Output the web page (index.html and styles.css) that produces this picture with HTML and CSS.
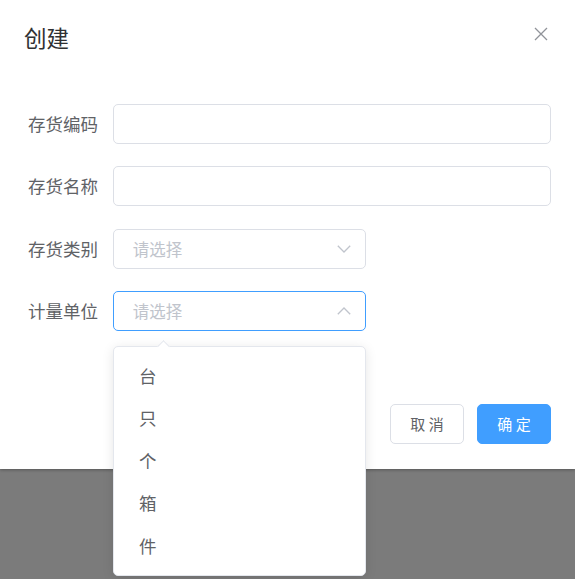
FILE: index.html
```html
<!DOCTYPE html>
<html lang="zh-CN">
<head>
<meta charset="utf-8">
<title>创建</title>
<link rel="stylesheet" href="styles.css">
</head>
<body>
<div class="dialog">
  <div class="dialog-header">
    <span class="dialog-title">创建</span>
    <span class="close-btn">
      <svg width="20" height="20" viewBox="0 0 20 20"><path d="M4 4 L16 16 M16 4 L4 16" stroke="#909399" stroke-width="1.3" fill="none"/></svg>
    </span>
  </div>
  <div class="dialog-body">
    <div class="form-item">
      <label class="form-label">存货编码</label>
      <div class="input input-wide"></div>
    </div>
    <div class="form-item">
      <label class="form-label">存货名称</label>
      <div class="input input-wide"></div>
    </div>
    <div class="form-item">
      <label class="form-label">存货类别</label>
      <div class="input select">
        <span class="placeholder">请选择</span>
        <svg class="chevron" width="14" height="8" viewBox="0 0 14 8"><path d="M0.8 0.8 L7 7 L13.2 0.8" stroke="#c0c4cc" stroke-width="1.3" fill="none"/></svg>
      </div>
    </div>
    <div class="form-item">
      <label class="form-label">计量单位</label>
      <div class="input select focused">
        <span class="placeholder">请选择</span>
        <svg class="chevron" width="14" height="8" viewBox="0 0 14 8"><path d="M0.8 7.2 L7 1 L13.2 7.2" stroke="#c0c4cc" stroke-width="1.3" fill="none"/></svg>
      </div>
    </div>
  </div>
  <div class="dialog-footer">
    <button class="btn">取 消</button>
    <button class="btn btn-primary">确 定</button>
  </div>
</div>
<div class="dropdown">
  <div class="dropdown-arrow"></div>
  <ul class="dropdown-list">
    <li class="dropdown-item">台</li>
    <li class="dropdown-item">只</li>
    <li class="dropdown-item">个</li>
    <li class="dropdown-item">箱</li>
    <li class="dropdown-item">件</li>
  </ul>
</div>
</body>
</html>
```

FILE: styles.css
```css
* { box-sizing: border-box; }
html, body {
  margin: 0;
  padding: 0;
  background: #7b7b7b;
  font-family: "Noto Sans CJK SC", "Noto Sans", sans-serif;
  width: 575px;
  height: 579px;
  overflow: hidden;
}
.dialog {
  background: #fff;
  width: 575px;
  box-shadow: 0 1px 3px rgba(0,0,0,0.3);
}
.dialog-header {
  display: flex;
  justify-content: space-between;
  align-items: flex-start;
  padding: 25px 25px 16.5px 24px;
}
.dialog-title {
  font-size: 22.5px;
  line-height: 25px;
  color: #303133;
}
.close-btn {
  width: 20px;
  height: 20px;
  display: block;
  margin-top: -1px;
  margin-right: -1px;
}
.close-btn svg { display: block; }
.dialog-body {
  padding: 37px 24px 37.5px 25px;
}
.form-item {
  display: flex;
  align-items: center;
  margin-bottom: 22.5px;
}
.form-label {
  width: 88px;
  padding-right: 15px;
  text-align: right;
  font-size: 17.5px;
  line-height: 40px;
  color: #606266;
  white-space: nowrap;
}
.input {
  height: 40px;
  border: 1px solid #dcdfe6;
  border-radius: 5px;
  background: #fff;
}
.input-wide { flex: 1; }
.select {
  width: 253px;
  display: flex;
  align-items: center;
  justify-content: space-between;
  padding: 0 14px 0 18.75px;
}
.select.focused { border-color: #409eff; }
.placeholder {
  font-size: 16.5px;
  color: #c0c4cc;
  line-height: 38px;
}
.chevron { display: block; }
.dialog-footer {
  display: flex;
  justify-content: flex-end;
  gap: 13px;
  padding: 12.5px 24px 25px 25px;
}
.btn {
  width: 74px;
  height: 40px;
  border: 1px solid #dcdfe6;
  border-radius: 5px;
  background: #fff;
  color: #606266;
  font-family: "Noto Sans CJK SC", "Noto Sans", sans-serif;
  font-size: 15px;
  padding: 0;
  margin: 0;
}
.btn-primary {
  background: #409eff;
  border-color: #409eff;
  color: #fff;
}
.dropdown {
  position: absolute;
  left: 113px;
  top: 346px;
  width: 253px;
  background: #fff;
  border: 1px solid #e4e7ed;
  border-radius: 5px;
  box-shadow: 0 2px 12px rgba(0,0,0,0.1);
}
.dropdown-arrow {
  position: absolute;
  left: 45px;
  top: -5px;
  width: 9px;
  height: 9px;
  background: #fff;
  border-left: 1px solid #e4e7ed;
  border-top: 1px solid #e4e7ed;
  transform: rotate(45deg);
}
.dropdown-list {
  list-style: none;
  margin: 0;
  padding: 7.5px 0;
}
.dropdown-item {
  height: 42.5px;
  line-height: 42.5px;
  padding: 0 25px;
  font-size: 17.5px;
  color: #606266;
}
```
